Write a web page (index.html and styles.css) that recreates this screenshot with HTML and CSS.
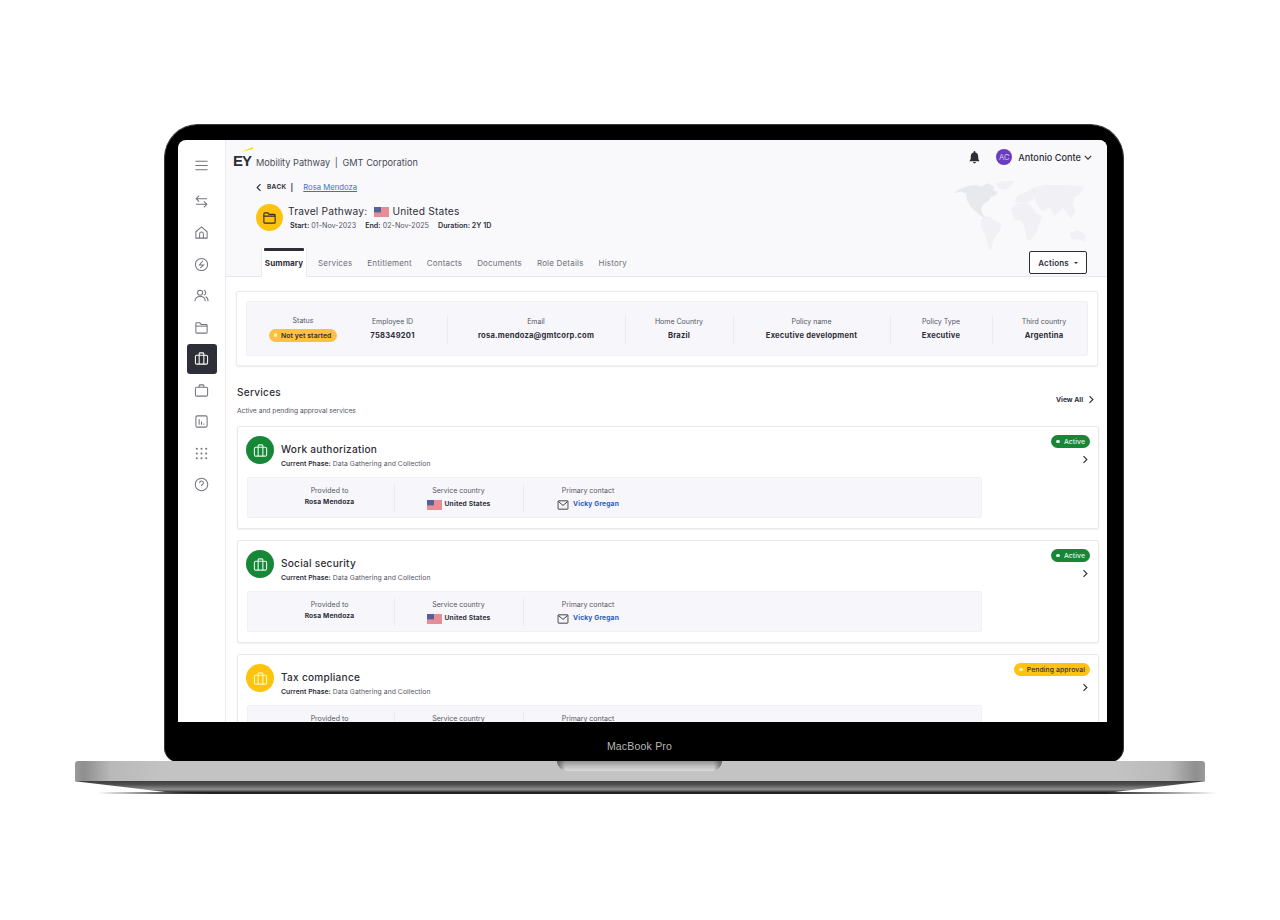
FILE: index.html
```html
<!DOCTYPE html>
<html lang="en">
<head>
<meta charset="utf-8">
<title>Mobility Pathway</title>
<link rel="stylesheet" href="styles.css">
</head>
<body>
<svg class="defs" width="0" height="0" aria-hidden="true">
  <defs>
    <symbol id="case" viewBox="0 0 16 16"><rect x="1.5" y="4.5" width="13" height="9.5" rx="1.5"/><path d="M5.5 4.5V3a1 1 0 0 1 1-1h3a1 1 0 0 1 1 1v1.5M5.5 4.5V14M10.5 4.5V14"/></symbol>
    <symbol id="folder" viewBox="0 0 16 16"><path d="M2 4a1 1 0 0 1 1-1h3.2l1.5 1.7H13a1 1 0 0 1 1 1V13a1 1 0 0 1-1 1H3a1 1 0 0 1-1-1z"/><path d="M2 6.5h12"/></symbol>
    <symbol id="chev" viewBox="0 0 8 12"><path d="M2 1.500 6.500 6 2 10.500"/></symbol>
    <symbol id="mail" viewBox="0 0 14 12"><rect x="1" y="1" width="12" height="10" rx=".6"/><path d="M1.500 1.800 7 6.500l5.500-4.700"/></symbol>
    <symbol id="flag" viewBox="0 0 15 10">
      <rect width="15" height="10" fill="#f3b8bd"/>
      <path d="M0 1h15M0 3h15M0 5h15M0 7h15M0 9h15" stroke="#d9636f" stroke-width="1"/>
      <rect width="7" height="5.400" fill="#56619a"/>
    </symbol>
    <pattern id="dots" width="4" height="4" patternUnits="userSpaceOnUse"><circle cx="2" cy="2" r="1.300" fill="#e1e2e7"/></pattern>
    <pattern id="dots-dark" width="4" height="4" patternUnits="userSpaceOnUse"><circle cx="2" cy="2" r="1.500" fill="#d0d1d7"/></pattern>
  </defs>
</svg>
<div class="laptop">
  <div class="lid">
    <div class="screen">
      <nav class="sidebar">
        <svg class="nav-icon menu" viewBox="0 0 16 16"><path d="M1.500 3.500h13M1.500 8h13M1.500 12.500h13"/></svg>
        <svg class="nav-icon swap" viewBox="0 0 16 16"><path d="M14 5H2.500M5.500 1.800 2.300 5l3.200 3.200M2 11h11.500M10.500 7.800l3.200 3.200-3.200 3.200"/></svg>
        <svg class="nav-icon" viewBox="0 0 16 16"><path d="M2 7.200 8 2l6 5.200V14H2z"/><path d="M6 14V9.500a2 2 0 0 1 4 0V14"/></svg>
        <svg class="nav-icon" viewBox="0 0 16 16"><circle cx="8" cy="8" r="6.500"/><path d="M9.500 4 5.800 8.500h4.400L6.500 12"/></svg>
        <svg class="nav-icon" viewBox="0 0 16 16"><circle cx="6.500" cy="5" r="2.700"/><path d="M1 14c0-3.200 2.400-5 5.500-5s5.500 1.800 5.500 5M10.500 2.400a2.700 2.700 0 0 1 0 5.200M12.500 9.400c1.500.7 2.500 2.300 2.500 4.600"/></svg>
        <svg class="nav-icon" viewBox="0 0 16 16"><use href="#folder"/></svg>
        <div class="nav-active"><svg class="nav-icon light" viewBox="0 0 16 16"><use href="#case"/></svg></div>
        <svg class="nav-icon" viewBox="0 0 16 16"><rect x="1.500" y="4.500" width="13" height="9.500" rx="1.500"/><path d="M5.500 4.500V3a1 1 0 0 1 1-1h3a1 1 0 0 1 1 1v1.500"/></svg>
        <svg class="nav-icon" viewBox="0 0 16 16"><rect x="2" y="2" width="12" height="12" rx="1.500"/><path d="M5.500 5.500v6M8 8v3.500M10.500 10v1.500"/></svg>
        <svg class="nav-icon grid-dots" viewBox="0 0 16 16"><circle cx="3" cy="3" r="1.100"/><circle cx="8" cy="3" r="1.100"/><circle cx="13" cy="3" r="1.100"/><circle cx="3" cy="8" r="1.100"/><circle cx="8" cy="8" r="1.100"/><circle cx="13" cy="8" r="1.100"/><circle cx="3" cy="13" r="1.100"/><circle cx="8" cy="13" r="1.100"/><circle cx="13" cy="13" r="1.100"/></svg>
        <svg class="nav-icon" viewBox="0 0 16 16"><circle cx="8" cy="8" r="6.700"/><path d="M6 6.300a2 2 0 1 1 3 1.700c-.7.400-1 .8-1 1.600"/><path d="M8 11.500v.4"/></svg>
      </nav>
      <main class="main">
        <header class="header">
          <svg class="world" viewBox="30 105 450 240" width="150" height="80" aria-hidden="true">
            <path fill="url(#dots-dark)" d="M70 160 85 148 110 138 135 135 150 140 170 130 190 140 185 150 200 155 195 165 180 172 170 185 160 190 150 205 155 222 165 235 155 232 135 215 118 200 108 180 105 160 90 155Z"/>
            <path fill="url(#dots)" d="M195 130 215 122 250 122 240 140 220 150 205 145Z"/>
            <path fill="url(#dots)" d="M150 237 170 228 190 240 212 252 205 275 190 295 183 315 180 332 172 325 165 290 150 262Z"/>
            <path fill="url(#dots)" d="M240 208 255 192 280 190 300 195 315 222 335 228 322 255 318 275 300 300 288 300 280 265 275 245 250 238Z"/>
            <path fill="url(#dots)" d="M250 182 262 165 280 160 295 148 310 150 310 175 290 188 262 190Z"/>
            <path fill="url(#dots)" d="M300 145 340 135 400 135 460 140 445 165 430 172 425 195 435 215 420 235 405 215 395 205 372 228 355 200 335 215 315 190 310 165Z"/>
            <path fill="url(#dots)" d="M415 280 440 270 465 285 460 305 440 296 425 300Z"/>
          </svg>
          <div class="topbar">
            <div class="logo">
              <svg class="logo-beam" viewBox="0 0 12 6" aria-hidden="true"><path d="M0 5 12 0v2z"/></svg>
              <span class="logo-text">EY</span>
            </div>
            <div class="app-title">Mobility Pathway <span class="sep">|</span> GMT Corporation</div>
            <div class="user">
              <svg class="bell" viewBox="0 0 12 14"><path d="M6 0a1 1 0 0 1 1 1v.600c2 .5 3 2 3 4.400 0 3 .6 3.800 1.500 5H.500C1.400 9.800 2 9 2 6c0-2.400 1-3.900 3-4.400V1a1 1 0 0 1 1-1zM4.500 12h3a1.500 1.500 0 0 1-3 0z"/></svg>
              <span class="avatar">AC</span>
              <span class="user-name">Antonio Conte</span>
              <svg class="user-caret" viewBox="0 0 10 6"><path d="M1 1l4 4 4-4"/></svg>
            </div>
          </div>
          <div class="back-row">
            <svg class="back-chev" viewBox="0 0 8 12"><path d="M6 1.500 1.500 6 6 10.500"/></svg>
            <span class="back-label">BACK</span>
            <span class="back-bar">|</span>
            <a class="crumb">Rosa Mendoza</a>
          </div>
          <div class="pathway">
            <span class="round amber"><svg class="round-icon dark" viewBox="0 0 16 16"><use href="#folder"/></svg></span>
            <div class="pathway-text">
              <div class="pathway-title">Travel Pathway: <svg class="flag big" viewBox="0 0 15 10"><use href="#flag"/></svg>United States</div>
              <div class="pathway-meta"><span><b>Start:</b> 01-Nov-2023</span><span><b>End:</b> 02-Nov-2025</span><span><b>Duration: 2Y 1D</b></span></div>
            </div>
          </div>
          <div class="tabs-row">
            <div class="tabs">
              <span class="tab active">Summary</span>
              <span class="tab">Services</span>
              <span class="tab">Entitlement</span>
              <span class="tab">Contacts</span>
              <span class="tab">Documents</span>
              <span class="tab">Role Details</span>
              <span class="tab">History</span>
            </div>
            <button class="actions">Actions <span class="caret"></span></button>
          </div>
        </header>
        <div class="content">
          <section class="summary">
            <div class="summary-inner">
              <div class="sum-col first"><span class="label">Status</span><span class="badge soft"><i></i>Not yet started</span></div>
              <div class="sum-col"><span class="label">Employee ID</span><strong>758349201</strong></div>
              <div class="sum-col div"><span class="label">Email</span><strong>rosa.mendoza@gmtcorp.com</strong></div>
              <div class="sum-col div"><span class="label">Home Country</span><strong>Brazil</strong></div>
              <div class="sum-col div"><span class="label">Policy name</span><strong>Executive development</strong></div>
              <div class="sum-col div"><span class="label">Policy Type</span><strong>Executive</strong></div>
              <div class="sum-col div last"><span class="label">Third country</span><strong>Argentina</strong></div>
            </div>
          </section>
          <div class="services-head">
            <div>
              <h2>Services</h2>
              <p>Active and pending approval services</p>
            </div>
            <a class="view-all">View All <svg class="chev small" viewBox="0 0 8 12"><use href="#chev"/></svg></a>
          </div>

          <article class="card">
            <div class="card-head">
              <span class="round green"><svg class="round-icon light" viewBox="0 0 16 16"><use href="#case"/></svg></span>
              <div class="card-title"><h3>Work authorization</h3><p><b>Current Phase:</b> Data Gathering and Collection</p></div>
              <div class="card-side"><span class="badge active-badge"><i></i>Active</span><svg class="chev" viewBox="0 0 8 12"><use href="#chev"/></svg></div>
            </div>
            <div class="card-info">
              <div class="info-col"><span class="label">Provided to</span><strong class="tight">Rosa Mendoza</strong></div>
              <div class="info-col div"><span class="label">Service country</span><strong><svg class="flag" viewBox="0 0 15 10"><use href="#flag"/></svg>United States</strong></div>
              <div class="info-col div"><span class="label">Primary contact</span><strong><svg class="mail" viewBox="0 0 14 12"><use href="#mail"/></svg><a class="link">Vicky Gregan</a></strong></div>
            </div>
          </article>

          <article class="card">
            <div class="card-head">
              <span class="round green"><svg class="round-icon light" viewBox="0 0 16 16"><use href="#case"/></svg></span>
              <div class="card-title"><h3>Social security</h3><p><b>Current Phase:</b> Data Gathering and Collection</p></div>
              <div class="card-side"><span class="badge active-badge"><i></i>Active</span><svg class="chev" viewBox="0 0 8 12"><use href="#chev"/></svg></div>
            </div>
            <div class="card-info">
              <div class="info-col"><span class="label">Provided to</span><strong class="tight">Rosa Mendoza</strong></div>
              <div class="info-col div"><span class="label">Service country</span><strong><svg class="flag" viewBox="0 0 15 10"><use href="#flag"/></svg>United States</strong></div>
              <div class="info-col div"><span class="label">Primary contact</span><strong><svg class="mail" viewBox="0 0 14 12"><use href="#mail"/></svg><a class="link">Vicky Gregan</a></strong></div>
            </div>
          </article>

          <article class="card">
            <div class="card-head">
              <span class="round amber"><svg class="round-icon pale" viewBox="0 0 16 16"><use href="#case"/></svg></span>
              <div class="card-title"><h3>Tax compliance</h3><p><b>Current Phase:</b> Data Gathering and Collection</p></div>
              <div class="card-side"><span class="badge pending-badge"><i></i>Pending approval</span><svg class="chev" viewBox="0 0 8 12"><use href="#chev"/></svg></div>
            </div>
            <div class="card-info">
              <div class="info-col"><span class="label">Provided to</span></div>
              <div class="info-col div"><span class="label">Service country</span></div>
              <div class="info-col div"><span class="label">Primary contact</span></div>
            </div>
          </article>
        </div>
      </main>
    </div>
    <div class="model">MacBook Pro</div>
  </div>
  <div class="base">
    <div class="notch"></div>
  </div>
  <div class="base-lower"></div>
  <div class="base-shadow"></div>
</div>
</body>
</html>
```
FILE: styles.css
```css
* { box-sizing: border-box; }
html, body { margin: 0; height: 100%; background: #fff; }
body { font-family: Inter, "Liberation Sans", sans-serif; color: #2e2e38; overflow: hidden; }
.defs { position: absolute; }
svg { display: block; }
h2, h3, p { margin: 0; font-weight: 400; }

/* device */
.laptop { display: flex; flex-direction: column; align-items: center; padding-top: 124px; }
.lid {
  width: 960px; height: 638px; margin-left: 8px; background: #000; border: 1px solid #3a3a3a; border-bottom: 0;
  border-radius: 34px 34px 14px 14px; padding: 15px 16px 0 13px;
  display: flex; flex-direction: column; flex: none;
}
.screen { width: 929px; height: 582px; background: #fff; display: flex; overflow: hidden; border-radius: 8px 8px 0 0; flex: none; }
.model { flex: 1; display: flex; align-items: center; justify-content: center; padding: 8px 6px 0 0; font: 10.500px "Liberation Sans", sans-serif; color: #b8b8b8; letter-spacing: .2px; }
.base {
  position: relative; width: 1130px; height: 20px; margin-top: -1px;
  background: linear-gradient(90deg, #9a9a9a 0, #8f8f8f .8%, #b9b9b9 3.200%, #c3c3c3 8%, #c3c3c3 92%, #b9b9b9 96.800%, #8f8f8f 99.200%, #9a9a9a 100%);
  border-radius: 3px 3px 0 0;
}
.notch {
  position: absolute; left: 482px; top: 0; width: 165px; height: 10px;
  border-radius: 0 0 10px 10px;
  background: linear-gradient(90deg, rgba(70,70,70,.7), transparent 5%, transparent 95%, rgba(70,70,70,.7)), linear-gradient(#8f8f8f, #bdbdbd 50%, #dadada);
}
.base-lower {
  width: 1130px; height: 12px;
  clip-path: polygon(0 0, 100% 0, 100% 3%, 92% 92%, 90% 100%, 10% 100%, 8% 92%, 0 3%);
  background: linear-gradient(#3f3f3f, #4f4f4f 30%, #8e8e8e 70%, #3d3d3d 90%, #111);
}
.base-shadow { width: 1120px; height: 2px; margin: -1px 0 0 34px; background: linear-gradient(90deg, transparent 0, #555 6%, #222 10%, #222 90%, #888 95%, transparent 100%); }

/* sidebar */
.sidebar { width: 48px; flex: none; border-right: 1px solid #ececf0; display: flex; flex-direction: column; align-items: center; padding: 17.500px 0 0 0; gap: 16.500px; }
.nav-icon { width: 15px; height: 15px; fill: none; stroke: #747480; stroke-width: 1.100; overflow: visible; flex: none; }
.menu { margin-bottom: 4.500px; }
.nav-active { width: 30px; height: 30px; margin: -7.500px 0; background: #2e2e38; border-radius: 3px; display: flex; align-items: center; justify-content: center; flex: none; }
.nav-icon.light { stroke: #fff; }
.grid-dots { fill: #747480; stroke: none; }

/* header */
.main { flex: 1; min-width: 0; display: flex; flex-direction: column; }
.header { position: relative; height: 137px; flex: none; background: #f9f9fc; border-bottom: 1px solid #e6e6ec; }
.world { position: absolute; left: 715px; top: 35px; }
.topbar { height: 33px; display: flex; padding: 5px 15px 0 7px; position: relative; }
.logo { position: relative; width: 23px; height: 28px; }
.logo-beam { position: absolute; left: 8px; top: 2px; width: 12px; height: 6px; fill: #f7dc00; }
.logo-text { position: absolute; left: 0; top: 8px; font: 700 15px/15px "Liberation Sans", sans-serif; letter-spacing: -.9px; color: #2e2e38; }
.app-title { margin-top: 12px; font-size: 9.200px; line-height: 12px; color: #4a4a55; white-space: pre; }
.sep { margin: 0 2px; }
.user { margin-left: auto; display: flex; align-items: center; height: 16px; margin-top: 4px; }
.bell { width: 11px; height: 13px; fill: #2e2e38; margin-right: 16px; }
.avatar { width: 16px; height: 16px; border-radius: 50%; background: #6a3cc0; color: #d8cdf2; font-size: 7.500px; display: flex; align-items: center; justify-content: center; margin-right: 6px; }
.user-name { font-size: 9.200px; font-weight: 500; color: #2e2e38; }
.user-caret { width: 8px; height: 5px; fill: none; stroke: #2e2e38; stroke-width: 1.400; margin-left: 3px; }

.back-row { height: 14px; margin: 7px 0 0 30px; display: flex; align-items: center; }
.back-chev { width: 6px; height: 9px; fill: none; stroke: #2e2e38; stroke-width: 1.500; margin-right: 5px; }
.back-label { font-size: 6.500px; font-weight: 700; color: #3a3a44; letter-spacing: .3px; }
.back-bar { font-size: 7.500px; margin: 0 10px 0 4px; color: #2e2e38; font-weight: 600; }
.crumb { font-size: 7.700px; color: #3b72c4; text-decoration: underline; }

.pathway { display: flex; margin: 10px 0 0 30px; height: 27px; }
.round { width: 27px; height: 27px; border-radius: 50%; display: flex; align-items: center; justify-content: center; flex: none; }
.round-icon { width: 15px; height: 15px; fill: none; stroke-width: 1.200; }
.round-icon.dark { stroke: #2e2e38; }
.round-icon.light { stroke: #e8f5ea; }
.round-icon.pale { stroke: #fff4c4; }
.amber { background: #fdc30f; }
.green { background: #168736; }
.pathway-text { margin-left: 5px; }
.pathway-title { display: flex; align-items: center; font-size: 10.200px; line-height: 13px; margin-top: 1px; color: #2e2e38; letter-spacing: .2px; white-space: pre; }
.flag { width: 15px; height: 10px; flex: none; }
.flag.big { margin: 0 3px 0 4px; }
.pathway-meta { display: flex; gap: 9px; margin: 3px 0 0 2px; font-size: 7.200px; line-height: 9px; color: #55555f; }
.pathway-meta b { font-weight: 600; color: #2e2e38; }

.tabs-row { display: flex; justify-content: space-between; align-items: flex-end; height: 29px; margin: 17px 20px 0 35px; }
.tabs { display: flex; height: 29px; gap: 15px; }
.tab { display: flex; align-items: center; height: 29px; font-size: 8px; color: #6e6e78; letter-spacing: .19px; }
.tab.active { position: relative; width: 46px; justify-content: center; background: #fff; color: #2e2e38; font-weight: 700; margin-right: -4px; letter-spacing: .1px; border-left: 1px solid #ececf0; border-right: 1px solid #ececf0; }
.tab.active::before { content: ""; position: absolute; left: 2px; right: 2px; top: 0; height: 2.500px; background: #2e2e38; border-radius: 1px; }
.actions { width: 58px; height: 23px; margin-bottom: 3px; background: #fff; border: 1px solid #2e2e38; border-radius: 2px; font: 600 8px Inter, sans-serif; color: #2e2e38; display: flex; align-items: center; justify-content: center; gap: 5px; padding: 0; letter-spacing: .15px; }
.caret { width: 0; height: 0; border-left: 2.500px solid transparent; border-right: 2.500px solid transparent; border-top: 2.500px solid #2e2e38; }

/* content */
.content { padding: 14px 8px 0 11px; flex: 1; min-height: 0; }
.summary { height: 75px; margin: 0 1px 0 -1px; padding: 9px; background: #fff; border: 1px solid #ececf0; border-radius: 2px; box-shadow: 0 1px 2px rgba(0,0,0,.08); }
.summary-inner { height: 55px; background: #f7f7fb; border: 1px solid #f0f0f5; border-radius: 2px; display: grid; grid-template-columns: 70px 109px 178px 108px 157px 102px 97px; padding-left: 21px; align-items: center; }
.sum-col { display: flex; flex-direction: column; align-items: center; gap: 3px; height: 27px; margin-top: 4px; justify-content: flex-start; position: relative; white-space: nowrap; }
.sum-col.first { gap: 3px; height: 30px; margin-top: 4px; }
.label { font-size: 7px; line-height: 10px; color: #55555f; }
strong { font-size: 7.600px; line-height: 12px; font-weight: 700; color: #2e2e38; letter-spacing: .22px; display: flex; align-items: center; }
.div::before { content: ""; position: absolute; left: 0; top: -2px; bottom: 0; width: 1px; background: #ebebf0; }
.sum-col.last { padding-left: 7px; }
.badge { display: inline-flex; align-items: center; height: 13px; border-radius: 7px; font-size: 6.800px; font-weight: 500; padding: 0 6px 0 5px; white-space: nowrap; letter-spacing: .1px; }
.badge i { width: 3.500px; height: 3.500px; border-radius: 50%; margin-right: 4px; background: currentColor; }
.soft { background: #fcc13e; color: #2e2e38; font-weight: 600; }
.soft i { background: #fff0b8; }
.active-badge { background: #168736; color: #e6f5ea; padding: 0 5px; }
.pending-badge { background: #fdc30f; color: #2e2e38; padding: 0 5px; }
.pending-badge i { background: #fff3bd; }

.services-head { display: flex; justify-content: space-between; align-items: center; height: 60px; padding: 10px 5px 0 0; }
h2 { font-size: 10px; line-height: 13px; font-weight: 500; color: #2e2e38; letter-spacing: .3px; margin-top: -1px; }
.services-head p { font-size: 6.700px; line-height: 10px; color: #55555f; margin-top: 7px; }
.view-all { display: flex; align-items: center; gap: 5px; font-size: 6.800px; font-weight: 700; color: #2e2e38; margin-top: -4px; }
.chev { width: 6px; height: 9px; fill: none; stroke: #2e2e38; stroke-width: 1.500; flex: none; }

.card { height: 103px; margin-bottom: 11px; padding: 9px 8px 0 9px; background: #fff; border: 1px solid #e8e8ed; border-radius: 2px; box-shadow: 0 1px 2px rgba(0,0,0,.06); }
.card-head { display: flex; height: 41px; margin-left: -1px; }
.card-head .round { width: 28px; height: 28px; }
.card-title { margin-left: 7px; padding-top: 7px; }
h3 { font-size: 10.100px; line-height: 13px; font-weight: 500; color: #2e2e38; letter-spacing: .25px; }
.card-title p { font-size: 6.800px; line-height: 10px; color: #55555f; margin-top: 3px; letter-spacing: .05px; }
.card-title b { font-weight: 600; color: #2e2e38; }
.card-side { margin-left: auto; display: flex; flex-direction: column; align-items: flex-end; margin-top: -1px; }
.card-side .chev { margin: 7px 2px 0 0; }
.card-info { width: 735px; height: 41px; background: #f7f7fb; border: 1px solid #f0f0f5; border-radius: 2px; display: grid; grid-template-columns: 129px 129px 130px; padding-left: 17px; padding-top: 8px; }
.info-col { position: relative; display: flex; flex-direction: column; align-items: center; height: 26px; white-space: nowrap; }
.info-col strong { font-size: 6.700px; margin-top: 3px; line-height: 11px; letter-spacing: .15px; }
.info-col strong.tight { margin-top: 1px; }
.info-col .flag { margin-right: 3px; }
.mail { width: 12px; height: 10px; fill: none; stroke: #2e2e38; stroke-width: 1.100; margin-right: 4px; flex: none; }
.link { color: #1f5bc4; }
```
